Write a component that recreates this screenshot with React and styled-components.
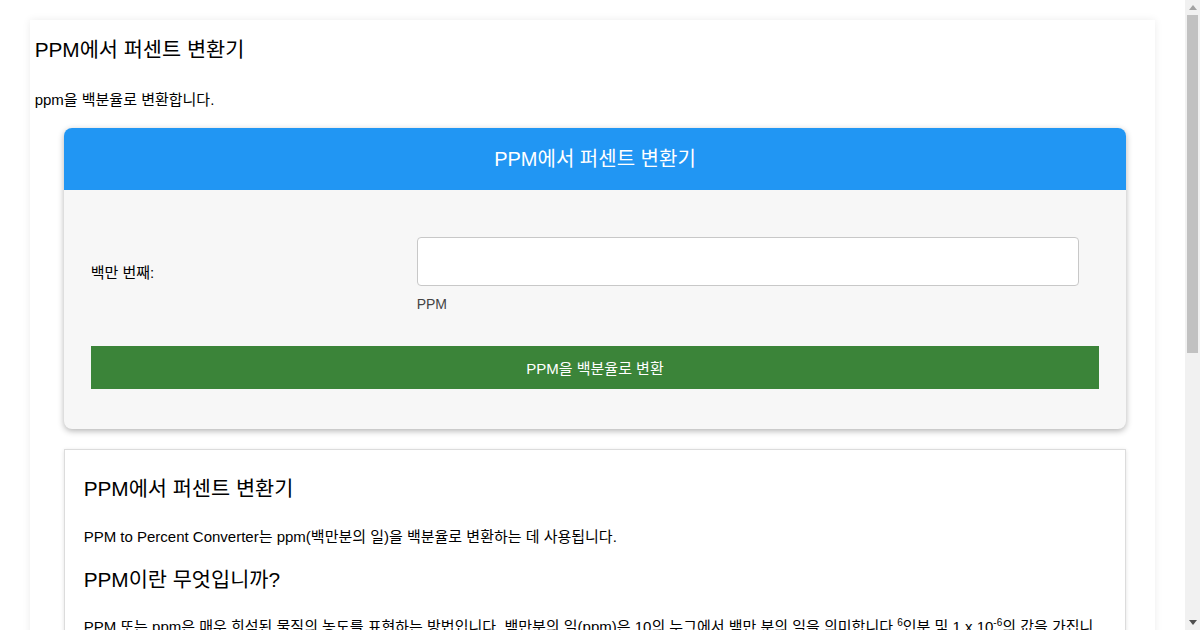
import styled, { createGlobalStyle } from "styled-components";

const GlobalStyle = createGlobalStyle`
  html, body {
    margin: 0;
    padding: 0;
    background: #ffffff;
    font-family: "Liberation Sans", Arial, "Noto Sans CJK KR", sans-serif;
    color: #000;
  }
  * { box-sizing: border-box; }
`;

const Shell = styled.div`
  display: flex;
  height: 100vh;
  overflow: hidden;
`;

const Viewport = styled.div`
  flex: 1;
  min-width: 0;
  overflow: hidden;
`;

// Drawing of the browser's scrollbar on the right edge
const Scrollbar = styled.div`
  width: 15px;
  flex-shrink: 0;
  background: #f1f1f1;
  display: flex;
  flex-direction: column;
  align-items: center;
`;

const Arrow = styled.div`
  height: 15px;
  display: flex;
  align-items: center;
  justify-content: center;
  flex-shrink: 0;
`;

const Thumb = styled.div`
  width: 11px;
  height: 338px;
  background: #c1c1c1;
`;

const Track = styled.div`
  flex: 1;
`;

const Page = styled.div`
  width: 95%;
  margin: 20px auto 0;
  padding: 5px 5px 40px;
  background: #fff;
  box-shadow: 0 0 8px rgba(0, 0, 0, 0.08);
`;

const PageTitle = styled.h1`
  font-size: 20.8px;
  font-weight: normal;
  margin: 12px 0 0;
  line-height: 26px;
`;

const Lead = styled.p`
  font-size: 15px;
  margin: 28px 0 0;
  line-height: 18px;
`;

const Card = styled.div`
  margin: 19px 24px 0 29px;
  border-radius: 8px;
  background: #f7f7f7;
  box-shadow: 0 2px 6px rgba(0, 0, 0, 0.3);
  overflow: hidden;
`;

const CardHeader = styled.div`
  background: #2196f3;
  color: #fff;
  height: 62px;
  padding-bottom: 4px;
  display: flex;
  align-items: center;
  justify-content: center;
  font-size: 20px;
`;

const CardBody = styled.div`
  padding: 47px 27px 40px;
`;

const Row = styled.div`
  display: grid;
  grid-template-columns: 326px 1fr;
  align-items: center;
  padding-right: 20px;
`;

const Label = styled.label`
  font-size: 15px;
  padding-bottom: 6px;
`;

const Field = styled.div`
  display: flex;
  flex-direction: column;
`;

const Input = styled.input`
  height: 49px;
  border: 1px solid #c8c8c8;
  border-radius: 4px;
  background: #fff;
  font-size: 16px;
  padding: 0 10px;
  &:focus { outline: none; }
`;

const Unit = styled.span`
  font-size: 14px;
  color: #444;
  margin-top: 10px;
  line-height: 16px;
`;

const Button = styled.button`
  display: block;
  width: 100%;
  height: 43px;
  margin-top: 34px;
  border: none;
  background: #3b8439;
  color: #fff;
  font-size: 15px;
  font-family: inherit;
  cursor: pointer;
`;

const Article = styled.div`
  margin: 20px 24px 0 29px;
  padding: 14px 19px 20px;
  background: #fff;
  border: 1px solid #dcdcdc;
  box-shadow: 0 1px 4px rgba(0, 0, 0, 0.12);
`;

const Heading = styled.h2`
  font-size: 20.8px;
  font-weight: normal;
  line-height: 26px;
  margin: ${(p) => p.$top || 21}px 0 0;
`;

const Text = styled.p`
  font-size: 15px;
  line-height: 18px;
  margin: ${(p) => p.$top || 25}px 0 0;
  sup { font-size: 10px; line-height: 0; }
`;

const App = () => {
  return (
    <>
      <GlobalStyle />
      <Shell>
        <Viewport>
          <Page>
            <PageTitle>PPM에서 퍼센트 변환기</PageTitle>
            <Lead>ppm을 백분율로 변환합니다.</Lead>
            <Card>
              <CardHeader>PPM에서 퍼센트 변환기</CardHeader>
              <CardBody>
                <Row>
                  <Label htmlFor="ppm">백만 번째:</Label>
                  <Field>
                    <Input id="ppm" type="text" />
                    <Unit>PPM</Unit>
                  </Field>
                </Row>
                <Button>PPM을 백분율로 변환</Button>
              </CardBody>
            </Card>
            <Article>
              <Heading $top={12}>PPM에서 퍼센트 변환기</Heading>
              <Text $top={26}>PPM to Percent Converter는 ppm(백만분의 일)을 백분율로 변환하는 데 사용됩니다.</Text>
              <Heading>PPM이란 무엇입니까?</Heading>
              <Text>
                PPM 또는 ppm은 매우 희석된 물질의 농도를 표현하는 방법입니다. 백만분의 일(ppm)은 10의 누그에서 백만 분의 일을 의미합니다 <sup>6</sup>인분 및 1 x 10<sup>-6</sup>의 값을 가집니다. 이는 0.0001%와 같습니다.
              </Text>
              <Heading>PPM을 퍼센트로 변환하는 방법</Heading>
              <Text>백분율은 ppm 값을 10000으로 나눈 값과 같습니다.</Text>
              <Text>퍼센트 = ppm / 10000</Text>
            </Article>
          </Page>
        </Viewport>
        <Scrollbar>
          <Arrow>
            <svg width="8" height="5" viewBox="0 0 8 5"><path d="M4 0 L8 5 L0 5 Z" fill="#a3a3a3" /></svg>
          </Arrow>
          <Thumb />
          <Track />
          <Arrow>
            <svg width="8" height="5" viewBox="0 0 8 5"><path d="M0 0 L8 0 L4 5 Z" fill="#505050" /></svg>
          </Arrow>
        </Scrollbar>
      </Shell>
    </>
  );
};

export default App;
